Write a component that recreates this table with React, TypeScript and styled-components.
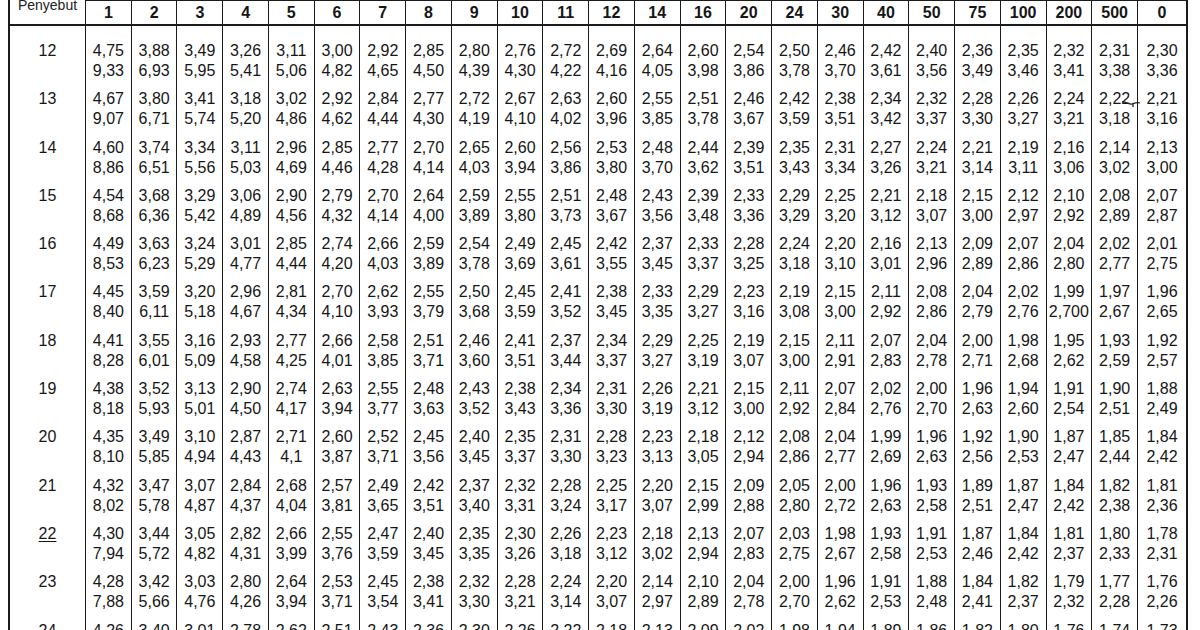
import styled, { createGlobalStyle } from "styled-components";

const GlobalStyle = createGlobalStyle`
  html, body {
    margin: 0;
    padding: 0;
    background: #fff;
  }
  body {
    font-family: "Liberation Sans Narrow", "Arial Narrow", "Liberation Sans", Arial, sans-serif;
    color: #161616;
    overflow: hidden;
  }
`;

const GRID = "75px repeat(23, 1fr) 49px";

const Page = styled.div`
  width: 1200px;
  height: 630px;
  overflow: hidden;
  padding-left: 8px;
  box-sizing: border-box;
  background: #fff;
`;

const Table = styled.div`
  width: 1180px;
  box-sizing: border-box;
  border-left: 2px solid #1b1b1b;
  border-right: 2px solid #1b1b1b;
`;

const HeadRow = styled.div`
  display: grid;
  grid-template-columns: ${GRID};
  height: 26px;
  border-bottom: 2px solid #1b1b1b;
  box-sizing: border-box;
`;

const HeadLabel = styled.div`
  font-size: 14px;
  line-height: 14px;
  margin-top: -2px;
  text-align: center;
  color: #222;
`;

const HeadCell = styled.div`
  border-left: 1px solid #1b1b1b;
  border-top: 1px solid #1b1b1b;
  display: flex;
  align-items: center;
  justify-content: center;
  font-weight: 700;
  font-size: 16px;
  padding-top: 1px;
`;

const Row = styled.div`
  display: grid;
  grid-template-columns: ${GRID};
`;

const Label = styled.div<{ $first?: boolean; $mark?: boolean }>`
  padding-top: ${(p) => (p.$first ? 15 : 4)}px;
  padding-bottom: 4.3px;
  text-align: center;
  font-size: 16px;
  line-height: 20px;
  text-decoration: ${(p) => (p.$mark ? "underline" : "none")};
  text-underline-offset: 2px;
`;

const Cell = styled.div<{ $first?: boolean }>`
  position: relative;
  border-left: 1px solid #1b1b1b;
  padding-top: ${(p) => (p.$first ? 15 : 4)}px;
  padding-bottom: 4.3px;
  display: flex;
  flex-direction: column;
  align-items: center;
  font-size: 16px;
  line-height: 20px;
`;

const Value = styled.span`
  white-space: nowrap;
`;

const Squiggle = styled.svg`
  position: absolute;
  right: -4px;
  top: 15px;
  width: 20px;
  height: 8px;
  overflow: visible;
`;

const heads = ["1", "2", "3", "4", "5", "6", "7", "8", "9", "10", "11", "12", "14", "16", "20", "24", "30", "40", "50", "75", "100", "200", "500", "0"];

const rows: { df: string; a: string; b: string }[] = [
  {
    df: "12",
    a: "4,75 3,88 3,49 3,26 3,11 3,00 2,92 2,85 2,80 2,76 2,72 2,69 2,64 2,60 2,54 2,50 2,46 2,42 2,40 2,36 2,35 2,32 2,31 2,30",
    b: "9,33 6,93 5,95 5,41 5,06 4,82 4,65 4,50 4,39 4,30 4,22 4,16 4,05 3,98 3,86 3,78 3,70 3,61 3,56 3,49 3,46 3,41 3,38 3,36",
  },
  {
    df: "13",
    a: "4,67 3,80 3,41 3,18 3,02 2,92 2,84 2,77 2,72 2,67 2,63 2,60 2,55 2,51 2,46 2,42 2,38 2,34 2,32 2,28 2,26 2,24 2,22 2,21",
    b: "9,07 6,71 5,74 5,20 4,86 4,62 4,44 4,30 4,19 4,10 4,02 3,96 3,85 3,78 3,67 3,59 3,51 3,42 3,37 3,30 3,27 3,21 3,18 3,16",
  },
  {
    df: "14",
    a: "4,60 3,74 3,34 3,11 2,96 2,85 2,77 2,70 2,65 2,60 2,56 2,53 2,48 2,44 2,39 2,35 2,31 2,27 2,24 2,21 2,19 2,16 2,14 2,13",
    b: "8,86 6,51 5,56 5,03 4,69 4,46 4,28 4,14 4,03 3,94 3,86 3,80 3,70 3,62 3,51 3,43 3,34 3,26 3,21 3,14 3,11 3,06 3,02 3,00",
  },
  {
    df: "15",
    a: "4,54 3,68 3,29 3,06 2,90 2,79 2,70 2,64 2,59 2,55 2,51 2,48 2,43 2,39 2,33 2,29 2,25 2,21 2,18 2,15 2,12 2,10 2,08 2,07",
    b: "8,68 6,36 5,42 4,89 4,56 4,32 4,14 4,00 3,89 3,80 3,73 3,67 3,56 3,48 3,36 3,29 3,20 3,12 3,07 3,00 2,97 2,92 2,89 2,87",
  },
  {
    df: "16",
    a: "4,49 3,63 3,24 3,01 2,85 2,74 2,66 2,59 2,54 2,49 2,45 2,42 2,37 2,33 2,28 2,24 2,20 2,16 2,13 2,09 2,07 2,04 2,02 2,01",
    b: "8,53 6,23 5,29 4,77 4,44 4,20 4,03 3,89 3,78 3,69 3,61 3,55 3,45 3,37 3,25 3,18 3,10 3,01 2,96 2,89 2,86 2,80 2,77 2,75",
  },
  {
    df: "17",
    a: "4,45 3,59 3,20 2,96 2,81 2,70 2,62 2,55 2,50 2,45 2,41 2,38 2,33 2,29 2,23 2,19 2,15 2,11 2,08 2,04 2,02 1,99 1,97 1,96",
    b: "8,40 6,11 5,18 4,67 4,34 4,10 3,93 3,79 3,68 3,59 3,52 3,45 3,35 3,27 3,16 3,08 3,00 2,92 2,86 2,79 2,76 2,700 2,67 2,65",
  },
  {
    df: "18",
    a: "4,41 3,55 3,16 2,93 2,77 2,66 2,58 2,51 2,46 2,41 2,37 2,34 2,29 2,25 2,19 2,15 2,11 2,07 2,04 2,00 1,98 1,95 1,93 1,92",
    b: "8,28 6,01 5,09 4,58 4,25 4,01 3,85 3,71 3,60 3,51 3,44 3,37 3,27 3,19 3,07 3,00 2,91 2,83 2,78 2,71 2,68 2,62 2,59 2,57",
  },
  {
    df: "19",
    a: "4,38 3,52 3,13 2,90 2,74 2,63 2,55 2,48 2,43 2,38 2,34 2,31 2,26 2,21 2,15 2,11 2,07 2,02 2,00 1,96 1,94 1,91 1,90 1,88",
    b: "8,18 5,93 5,01 4,50 4,17 3,94 3,77 3,63 3,52 3,43 3,36 3,30 3,19 3,12 3,00 2,92 2,84 2,76 2,70 2,63 2,60 2,54 2,51 2,49",
  },
  {
    df: "20",
    a: "4,35 3,49 3,10 2,87 2,71 2,60 2,52 2,45 2,40 2,35 2,31 2,28 2,23 2,18 2,12 2,08 2,04 1,99 1,96 1,92 1,90 1,87 1,85 1,84",
    b: "8,10 5,85 4,94 4,43 4,1 3,87 3,71 3,56 3,45 3,37 3,30 3,23 3,13 3,05 2,94 2,86 2,77 2,69 2,63 2,56 2,53 2,47 2,44 2,42",
  },
  {
    df: "21",
    a: "4,32 3,47 3,07 2,84 2,68 2,57 2,49 2,42 2,37 2,32 2,28 2,25 2,20 2,15 2,09 2,05 2,00 1,96 1,93 1,89 1,87 1,84 1,82 1,81",
    b: "8,02 5,78 4,87 4,37 4,04 3,81 3,65 3,51 3,40 3,31 3,24 3,17 3,07 2,99 2,88 2,80 2,72 2,63 2,58 2,51 2,47 2,42 2,38 2,36",
  },
  {
    df: "22",
    a: "4,30 3,44 3,05 2,82 2,66 2,55 2,47 2,40 2,35 2,30 2,26 2,23 2,18 2,13 2,07 2,03 1,98 1,93 1,91 1,87 1,84 1,81 1,80 1,78",
    b: "7,94 5,72 4,82 4,31 3,99 3,76 3,59 3,45 3,35 3,26 3,18 3,12 3,02 2,94 2,83 2,75 2,67 2,58 2,53 2,46 2,42 2,37 2,33 2,31",
  },
  {
    df: "23",
    a: "4,28 3,42 3,03 2,80 2,64 2,53 2,45 2,38 2,32 2,28 2,24 2,20 2,14 2,10 2,04 2,00 1,96 1,91 1,88 1,84 1,82 1,79 1,77 1,76",
    b: "7,88 5,66 4,76 4,26 3,94 3,71 3,54 3,41 3,30 3,21 3,14 3,07 2,97 2,89 2,78 2,70 2,62 2,53 2,48 2,41 2,37 2,32 2,28 2,26",
  },
  {
    df: "24",
    a: "4,26 3,40 3,01 2,78 2,62 2,51 2,43 2,36 2,30 2,26 2,22 2,18 2,13 2,09 2,02 1,98 1,94 1,89 1,86 1,82 1,80 1,76 1,74 1,73",
    b: "7,82 5,61 4,72 4,22 3,90 3,67 3,50 3,36 3,25 3,17 3,09 3,03 2,93 2,85 2,74 2,66 2,58 2,49 2,44 2,36 2,33 2,27 2,23 2,21",
  },
];

function App() {
  return (
    <Page>
      <GlobalStyle />
      <Table>
        <HeadRow>
          <HeadLabel>Penyebut</HeadLabel>
          {heads.map((h) => (
            <HeadCell key={h}>{h}</HeadCell>
          ))}
        </HeadRow>
        {rows.map((r, i) => {
          const top = r.a.split(" ");
          const bottom = r.b.split(" ");
          return (
            <Row key={r.df}>
              <Label $first={i === 0} $mark={r.df === "22"}>
                {r.df}
              </Label>
              {top.map((v, j) => (
                <Cell key={j} $first={i === 0}>
                  <Value>{v}</Value>
                  <Value>{bottom[j]}</Value>
                  {r.df === "13" && j === 22 && (
                    <Squiggle viewBox="0 0 20 8">
                      <path d="M1 2 C5 1 8 5 11 4 C14 3 16 2 19 3 M12 3 L12 7" stroke="#222" strokeWidth="1.3" fill="none" />
                    </Squiggle>
                  )}
                </Cell>
              ))}
            </Row>
          );
        })}
      </Table>
    </Page>
  );
}

export default App;
